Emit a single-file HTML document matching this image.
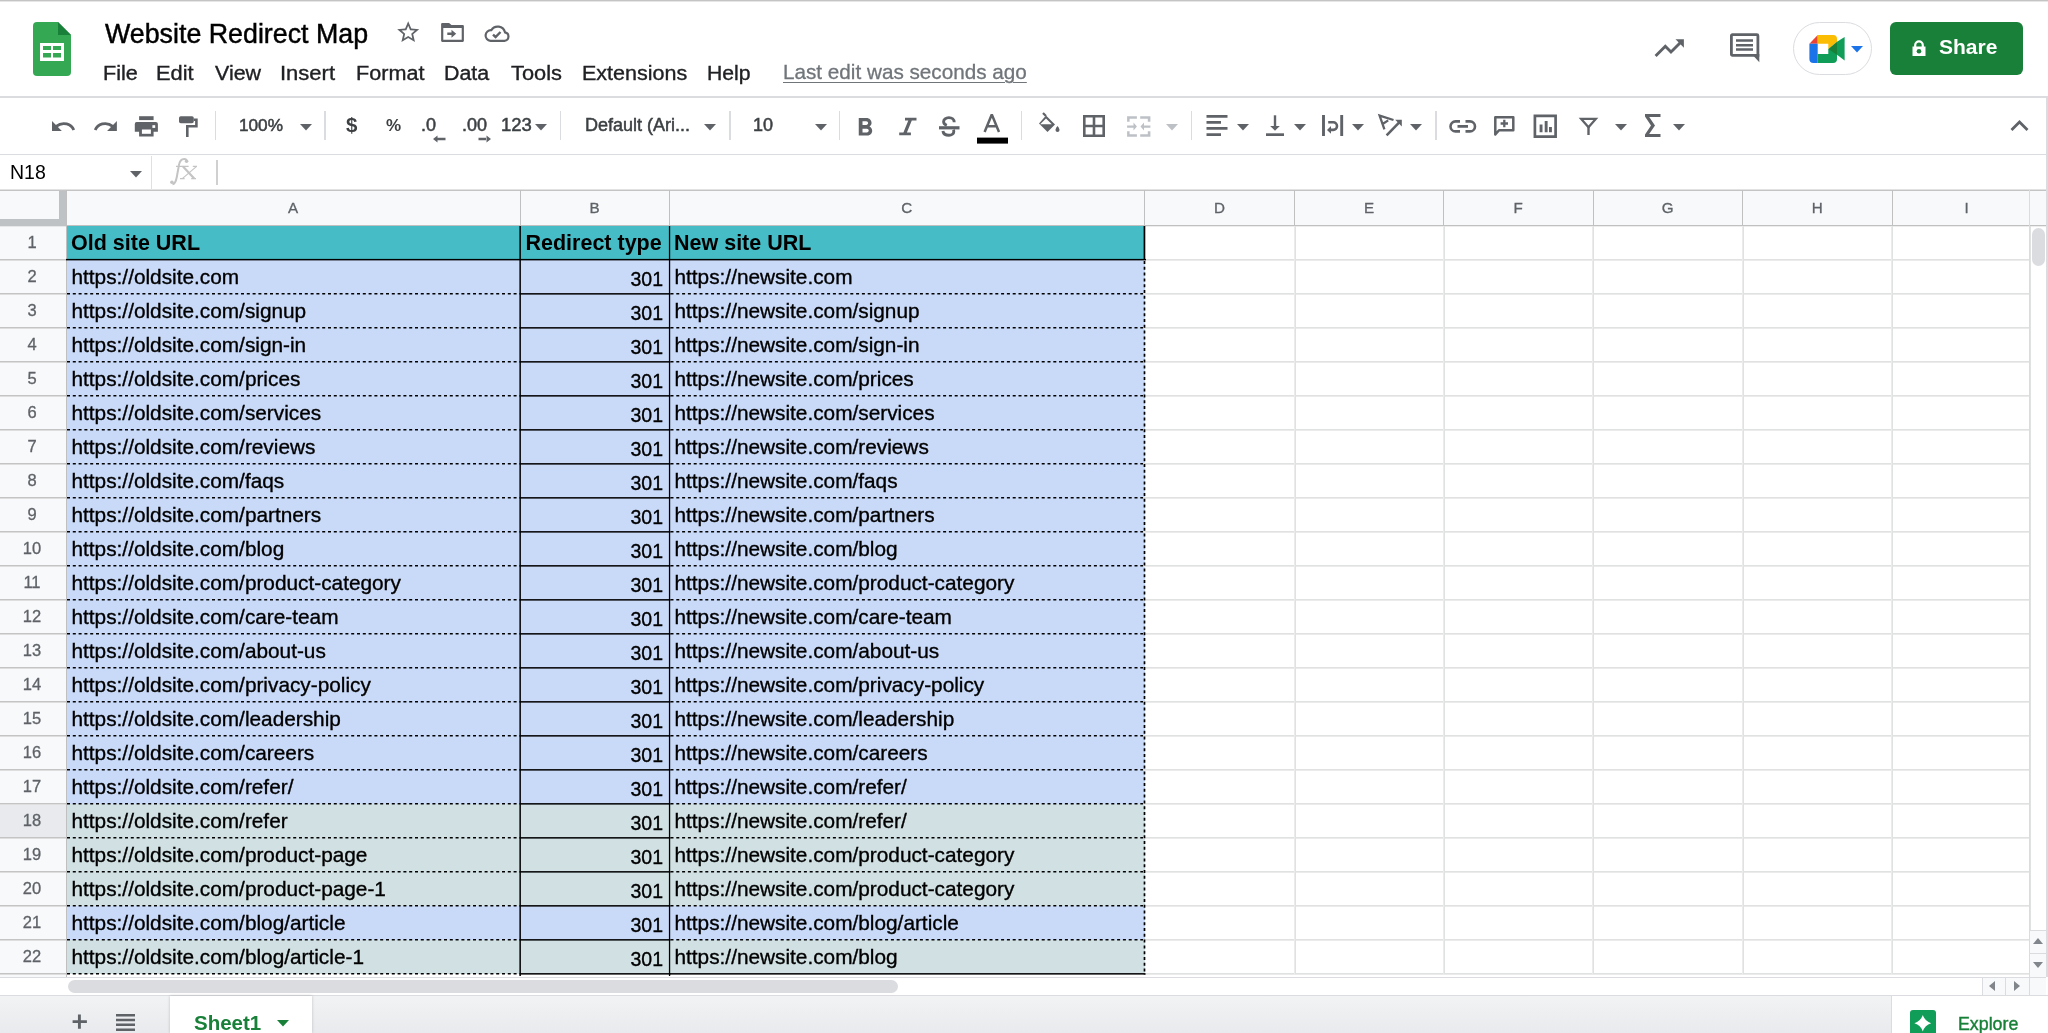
<!DOCTYPE html>
<html><head><meta charset="utf-8"><title>Website Redirect Map</title>
<style>
*{box-sizing:border-box;margin:0;padding:0}
html,body{width:2048px;height:1033px;overflow:hidden;background:#fff}
body{position:relative;font-family:"Liberation Sans",sans-serif;color:#202124;will-change:transform}
.md{-webkit-text-stroke:0.5px currentColor}
.ct{color:#000;-webkit-text-stroke:0.35px #000}
.a{position:absolute}
.t{position:absolute;white-space:nowrap;line-height:1}
svg{position:absolute;overflow:visible}
.ic{fill:#5f6368}
</style></head><body>

<div class="a" style="left:0;top:0;width:2048px;height:1px;background:#c4c4c4"></div><div class="a" style="left:0;top:1px;width:2048px;height:1px;background:#e6e6e6"></div>
<svg style="left:33px;top:22px" width="38" height="54" viewBox="0 0 38 54">
<path d="M4 0H25L38 13V50A4 4 0 0 1 34 54H4A4 4 0 0 1 0 50V4A4 4 0 0 1 4 0Z" fill="#34a853"/>
<path d="M25 0L38 13H25Z" fill="#188038"/>
<path d="M7 21H31V39H7Z" fill="#fff"/>
<path d="M10 24H18V28H10ZM20 24H28V28H20ZM10 31H18V35.5H10ZM20 31H28V35.5H20Z" fill="#34a853"/>
</svg>
<div class="t" style="left:105px;top:20.5px;font-size:26.8px;color:#000;-webkit-text-stroke:0.45px #000">Website Redirect Map</div>
<svg style="left:395.1px;top:19.2px" width="26.4" height="26.4" viewBox="0 0 24 24">
<path d="M22 9.24l-7.19-.62L12 2 9.19 8.63 2 9.24l5.46 4.73L5.82 21 12 17.27 18.18 21l-1.63-7.03L22 9.24zM12 15.4l-3.76 2.27 1-4.28-3.32-2.88 4.38-.38L12 6.1l1.71 4.04 4.38.38-3.32 2.88 1 4.28L12 15.4z" fill="#5f6368"/></svg>
<svg style="left:441px;top:23px" width="23" height="19" viewBox="0 0 23 19">
<path d="M1.2 17.8V1.2H8L10 3H21.8V17.8Z" fill="none" stroke="#5f6368" stroke-width="2.2" stroke-linejoin="round"/>
<path d="M1 1H8L10 3H22V5H1Z" fill="#5f6368"/>
<path d="M6.3 9.4H10.5V6.8L15.2 10.7L10.5 14.7V12H6.3Z" fill="#5f6368"/></svg>
<svg style="left:484px;top:24px" width="26" height="18" viewBox="0 0 26 18">
<path d="M6.5 16.8H20.5A4.3 4.3 0 0 0 21 8.3A7.5 7.5 0 0 0 7.3 6.2A5.3 5.3 0 0 0 6.5 16.8Z" fill="none" stroke="#5f6368" stroke-width="2.2"/>
<path d="M9 10.6L11.6 13L16.5 8" fill="none" stroke="#5f6368" stroke-width="2.4"/></svg>
<div class="t" style="left:102.6px;top:63px;font-size:20px;color:#202124;-webkit-text-stroke:0.35px #202124;transform:scaleX(1.08);transform-origin:0 0">File</div>
<div class="t" style="left:155.8px;top:63px;font-size:20px;color:#202124;-webkit-text-stroke:0.35px #202124;transform:scaleX(1.09);transform-origin:0 0">Edit</div>
<div class="t" style="left:214.9px;top:63px;font-size:20px;color:#202124;-webkit-text-stroke:0.35px #202124;transform:scaleX(1.07);transform-origin:0 0">View</div>
<div class="t" style="left:279.8px;top:63px;font-size:20px;color:#202124;-webkit-text-stroke:0.35px #202124;transform:scaleX(1.1);transform-origin:0 0">Insert</div>
<div class="t" style="left:355.8px;top:63px;font-size:20px;color:#202124;-webkit-text-stroke:0.35px #202124;transform:scaleX(1.08);transform-origin:0 0">Format</div>
<div class="t" style="left:443.9px;top:63px;font-size:20px;color:#202124;-webkit-text-stroke:0.35px #202124;transform:scaleX(1.07);transform-origin:0 0">Data</div>
<div class="t" style="left:511px;top:63px;font-size:20px;color:#202124;-webkit-text-stroke:0.35px #202124;transform:scaleX(1.09);transform-origin:0 0">Tools</div>
<div class="t" style="left:581.9px;top:63px;font-size:20px;color:#202124;-webkit-text-stroke:0.35px #202124;transform:scaleX(1.075);transform-origin:0 0">Extensions</div>
<div class="t" style="left:707px;top:63px;font-size:20px;color:#202124;-webkit-text-stroke:0.35px #202124;transform:scaleX(1.06);transform-origin:0 0">Help</div>
<div class="t" style="left:783px;top:62px;font-size:20.7px;color:#70757a;-webkit-text-stroke:0.3px #70757a;text-decoration:underline;text-decoration-thickness:1.4px;text-underline-offset:2.5px">Last edit was seconds ago</div>
<svg style="left:1654px;top:38px" width="32" height="20" viewBox="0 0 32 20">
<path d="M1.6 18L11.3 8.3L17 14L26.5 4.5" fill="none" stroke="#5f6368" stroke-width="2.9"/>
<path d="M21.5 1.3H29.9V9.7Z" fill="#5f6368"/></svg>
<svg style="left:1729px;top:33px" width="32" height="30" viewBox="0 0 32 30">
<path d="M3.4 1.7H27.9A1 1 0 0 1 28.9 2.7V22.3H3.4A1 1 0 0 1 2.4 21.3V2.7A1 1 0 0 1 3.4 1.7Z" fill="none" stroke="#5f6368" stroke-width="2.8"/>
<path d="M22.8 20.9H30.3V29.3Z" fill="#5f6368"/>
<path d="M7 6.3H24V8.8H7ZM7 11H24V13.6H7ZM7 15.2H24V17.7H7Z" fill="#5f6368"/></svg>
<div class="a" style="left:1793px;top:22px;width:79px;height:53px;border:1.5px solid #dadce0;border-radius:27px"></div>
<svg style="left:1800px;top:28px" width="70" height="42" viewBox="0 0 70 42">
<path d="M9.4 15.7L17.7 6.9V15.7Z" fill="#ea4335"/>
<path d="M17.7 6.9H33A4 4 0 0 1 37 10.9V13.8L28.3 20.9V15.7H17.7Z" fill="#fbbc04"/>
<path d="M9.4 15.7H17.7V35H13.4A4 4 0 0 1 9.4 31Z" fill="#1a73e8"/>
<path d="M17.7 26H28.3V20.9H37V31A4 4 0 0 1 33 35H17.7Z" fill="#0f9d58"/>
<path d="M28.3 20.9L37 13.8V26.8Z" fill="#188038"/>
<path d="M37 13.8L44.6 9V32.6L37 26.8Z" fill="#0f9d58"/>
</svg>
<svg style="left:1851px;top:46px" width="12" height="7" viewBox="0 0 12 7"><path d="M0 0H12L6 6.5Z" fill="#1a73e8"/></svg>
<div class="a" style="left:1890px;top:22px;width:133px;height:53px;background:#188038;border-radius:6px"></div>
<svg style="left:1911px;top:39px" width="16" height="18" viewBox="0 0 16 18">
<path d="M4.2 8V6.2A3.8 3.8 0 0 1 11.8 6.2V8" fill="none" stroke="#fff" stroke-width="2.2"/>
<path d="M1.5 7.5H14.5V17H1.5Z" fill="#fff"/><circle cx="8" cy="12.3" r="2.3" fill="#188038"/></svg>
<div class="t" style="left:1939px;top:36px;font-size:21px;color:#fff;font-weight:bold">Share</div>
<div class="a" style="left:0;top:96px;width:2048px;height:1.5px;background:#dadce0"></div>
<div class="a" style="left:2046px;top:97px;width:2px;height:880px;background:#dadce0"></div>
<div class="a" style="left:0;top:154px;width:2048px;height:1px;background:#dadce0"></div>
<svg style="left:51px;top:118px" width="26" height="14" viewBox="0 0 26 14">
<path d="M22.8 12C20.5 6.3 12 2.8 5.2 8.4" fill="none" stroke="#5f6368" stroke-width="2.8"/>
<path d="M1 2.9V13H10.8Z" fill="#5f6368"/></svg>
<svg style="left:92px;top:118px" width="26" height="14" viewBox="0 0 26 14">
<path d="M3.2 12C5.5 6.3 14 2.8 20.8 8.4" fill="none" stroke="#5f6368" stroke-width="2.8"/>
<path d="M24.9 2.9V13H15.1Z" fill="#5f6368"/></svg>
<svg style="left:134px;top:115px" width="25" height="23" viewBox="0 0 25 23">
<path d="M5.1 1.2H19.6V5.1H5.1Z" fill="#5f6368"/>
<path d="M3 7H21.9A2 2 0 0 1 23.9 9V16.8H19.6V21.5H5.1V16.8H0.8V9A2 2 0 0 1 3 7Z" fill="#5f6368"/>
<path d="M7.9 14.5H16.9V18.8H7.9Z" fill="#fff"/><rect x="18.4" y="10.2" width="2.8" height="2.7" fill="#fff"/></svg>
<svg style="left:179px;top:115px" width="20" height="23" viewBox="0 0 20 23">
<path d="M1.8 1.2H13A1.8 1.8 0 0 1 14.8 3V6.4A1.8 1.8 0 0 1 13 8.2H1.8A1.8 1.8 0 0 1 0 6.4V3A1.8 1.8 0 0 1 1.8 1.2Z" fill="#5f6368"/>
<path d="M14.8 4.7H17.4V11.3H8.3V21.9" fill="none" stroke="#5f6368" stroke-width="2.6"/></svg>
<div class="a" style="left:214.5px;top:111px;width:1.5px;height:29px;background:#dadce0"></div>
<div class="t md" style="left:239px;top:116.5px;font-size:17.2px;color:#3c4043">100%</div>
<svg style="left:300px;top:124px" width="12" height="7" viewBox="0 0 12 7"><path d="M0 0H12L6 6.5Z" fill="#5f6368"/></svg>
<div class="a" style="left:324px;top:111px;width:1.5px;height:29px;background:#dadce0"></div>
<div class="t" style="left:346px;top:114.5px;font-size:20.5px;color:#3c4043;font-weight:bold">$</div>
<div class="t" style="left:386px;top:116.5px;font-size:17px;color:#3c4043;font-weight:bold">%</div>
<div class="t md" style="left:421px;top:116px;font-size:18px;color:#3c4043">.0</div>
<svg style="left:433px;top:136px" width="13" height="6" viewBox="0 0 13 6"><path d="M4 1.8H12.5V4.2H4Z M0 3L4.5 -0.5V6.5Z" fill="#5f6368"/></svg>
<div class="t md" style="left:462px;top:116px;font-size:18px;color:#3c4043">.00</div>
<svg style="left:478px;top:136px" width="13" height="6" viewBox="0 0 13 6"><path d="M0.5 1.8H9V4.2H0.5Z M13 3L8.5 -0.5V6.5Z" fill="#5f6368"/></svg>
<div class="t md" style="left:501px;top:116px;font-size:18.5px;color:#3c4043">123</div>
<svg style="left:535px;top:124px" width="12" height="7" viewBox="0 0 12 7"><path d="M0 0H12L6 6.5Z" fill="#5f6368"/></svg>
<div class="a" style="left:559.5px;top:111px;width:1.5px;height:29px;background:#dadce0"></div>
<div class="t md" style="left:585px;top:116px;font-size:18px;color:#3c4043">Default (Ari...</div>
<svg style="left:704px;top:124px" width="12" height="7" viewBox="0 0 12 7"><path d="M0 0H12L6 6.5Z" fill="#5f6368"/></svg>
<div class="a" style="left:729px;top:111px;width:1.5px;height:29px;background:#dadce0"></div>
<div class="t md" style="left:753px;top:116px;font-size:18px;color:#3c4043">10</div>
<svg style="left:815px;top:124px" width="12" height="7" viewBox="0 0 12 7"><path d="M0 0H12L6 6.5Z" fill="#5f6368"/></svg>
<div class="a" style="left:838.5px;top:111px;width:1.5px;height:29px;background:#dadce0"></div>
<svg style="left:850.25px;top:112.5px" width="30" height="30" viewBox="0 0 24 24">
<path d="M15.6 10.79c.97-.67 1.65-1.77 1.65-2.79 0-2.26-1.75-4-4-4H7v14h7.04c2.09 0 3.71-1.7 3.71-3.79 0-1.52-.86-2.82-2.15-3.42zM10 6.5h3c.83 0 1.5.67 1.5 1.5s-.67 1.5-1.5 1.5h-3v-3zm3.5 9H10v-3h3.5c.83 0 1.5.67 1.5 1.5s-.67 1.5-1.5 1.5z" fill="#5f6368"/></svg>
<svg style="left:898px;top:116px" width="20" height="20" viewBox="0 0 20 20">
<path d="M7 1.7H18.5V4.6H7ZM1.2 16.4H12.9V19.2H1.2ZM10.3 4.6H13.8L8.9 16.4H5.4Z" fill="#5f6368"/></svg>
<svg style="left:938px;top:116px" width="23" height="21" viewBox="0 0 23 21">
<path d="M16.2 6.3C16.2 3.6 13.9 1.6 10.9 1.6C7.7 1.6 5.6 3.4 5.6 5.8C5.6 7.5 6.8 8.6 8.8 9.4" fill="none" stroke="#5f6368" stroke-width="2.9"/>
<rect x="1" y="10.2" width="20.5" height="3.2" fill="#5f6368"/>
<path d="M15.3 13.8C15.6 14.3 15.8 14.8 15.8 15.4C15.8 17.7 13.7 19.3 11 19.3C7.8 19.3 5.3 17.7 4.9 15" fill="none" stroke="#5f6368" stroke-width="2.9"/></svg>
<svg style="left:977px;top:112px" width="32" height="32" viewBox="0 0 32 32">
<path d="M7.6 20L14.8 2.5M14.8 2.5L22 20M10 14.3H19.6" fill="none" stroke="#5f6368" stroke-width="2.5"/>
<rect x="0" y="25.6" width="31" height="6" fill="#000"/></svg>
<div class="a" style="left:1020.5px;top:111px;width:1.5px;height:29px;background:#dadce0"></div>
<svg style="left:1037px;top:112px" width="24" height="21" viewBox="0 0 24 21">
<path d="M6 1L9 4" stroke="#5f6368" stroke-width="2.2"/>
<path d="M9 3.5L18 12.5L10.5 20L2 11.5Z" fill="#5f6368"/>
<path d="M9 6.5L14.8 12.3H3.2Z" fill="#fff"/>
<path d="M20.5 14C22 16 22.5 17 22.5 18A2 2 0 0 1 18.5 18C18.5 17 19 16 20.5 14Z" fill="#5f6368"/></svg>
<svg style="left:1083px;top:115px" width="22" height="22" viewBox="0 0 22 22">
<path d="M1.3 1.3H20.7V20.7H1.3ZM11 1.3V20.7M1.3 11H20.7" fill="none" stroke="#5f6368" stroke-width="2.6"/></svg>
<svg style="left:1115px;top:108px" width="40" height="37" viewBox="0 0 40 37">
<path d="M12.1 8.2H21.9V10.7H14.6V13.7H12.1ZM25.2 8.2H35.4V13.7H32.8V10.7H25.2ZM12.1 23.2H14.6V26.2H21.9V28.7H12.1ZM32.8 23.2H35.4V28.7H25.2V26.2H32.8Z" fill="#bdc1c6"/>
<path d="M12.1 17.4H18.5V14.5L21.9 18.5L18.5 22.5V19.7H12.1ZM35.4 17.4H29V14.5L25.5 18.5L29 22.5V19.7H35.4Z" fill="#bdc1c6"/></svg>
<svg style="left:1165.5px;top:124px" width="12" height="7" viewBox="0 0 12 7"><path d="M0 0H12L6 6.5Z" fill="#bdc1c6"/></svg>
<div class="a" style="left:1190.5px;top:111px;width:1.5px;height:29px;background:#dadce0"></div>
<svg style="left:1206px;top:115px" width="22" height="22" viewBox="0 0 22 22">
<path d="M0.5 0H21.5V2.8H0.5ZM0.5 6H15V8.8H0.5ZM0.5 12H21.5V14.8H0.5ZM0.5 18.2H15V21H0.5Z" fill="#5f6368"/></svg>
<svg style="left:1237px;top:124px" width="12" height="7" viewBox="0 0 12 7"><path d="M0 0H12L6 6.5Z" fill="#5f6368"/></svg>
<svg style="left:1266px;top:115px" width="18" height="22" viewBox="0 0 18 22">
<path d="M9 0.3V13" stroke="#5f6368" stroke-width="2.4"/><path d="M4.2 11H13.8L9 15.8Z" fill="#5f6368"/>
<path d="M0 18.3H18V21H0Z" fill="#5f6368"/></svg>
<svg style="left:1294px;top:124px" width="12" height="7" viewBox="0 0 12 7"><path d="M0 0H12L6 6.5Z" fill="#5f6368"/></svg>
<svg style="left:1322px;top:115px" width="22" height="22" viewBox="0 0 22 22">
<path d="M1.5 0V21M19.7 0V21" stroke="#5f6368" stroke-width="2.9"/>
<path d="M6.2 7.3H11.2A3.8 3.8 0 0 1 11.2 14.9H8.4" fill="none" stroke="#5f6368" stroke-width="2.6"/>
<path d="M5 14.9L9 11V18.8Z" fill="#5f6368"/></svg>
<svg style="left:1352px;top:124px" width="12" height="7" viewBox="0 0 12 7"><path d="M0 0H12L6 6.5Z" fill="#5f6368"/></svg>
<svg style="left:1378px;top:114px" width="25" height="23" viewBox="0 0 25 23">
<path d="M15.5 6L1.6 1.6L6.4 15.4M5 9.8L10.2 6.4" fill="none" stroke="#5f6368" stroke-width="2.3"/>
<path d="M8.6 21.3L21.5 8.2" stroke="#5f6368" stroke-width="2.6"/>
<path d="M17.2 5.8H23.8V12.4Z" fill="#5f6368"/></svg>
<svg style="left:1410px;top:124px" width="12" height="7" viewBox="0 0 12 7"><path d="M0 0H12L6 6.5Z" fill="#5f6368"/></svg>
<div class="a" style="left:1435px;top:111px;width:1.5px;height:29px;background:#dadce0"></div>
<svg style="left:1449px;top:120px" width="28" height="13" viewBox="0 0 28 13">
<path d="M11 1.4H6.5A5 5 0 0 0 6.5 11.4H11M16.5 1.4H21A5 5 0 0 1 21 11.4H16.5M8.5 6.4H19" fill="none" stroke="#5f6368" stroke-width="2.6"/></svg>
<svg style="left:1493px;top:115px" width="22" height="22" viewBox="0 0 22 22">
<path d="M2.3 19.5V2.3H20.3V15.2H6Z" fill="none" stroke="#5f6368" stroke-width="2.5" stroke-linejoin="round"/>
<path d="M11.3 4.8V12.2M7.6 8.5H15" stroke="#5f6368" stroke-width="2.3"/></svg>
<svg style="left:1533px;top:114px" width="25" height="25" viewBox="0 0 25 25">
<path d="M1.9 1.9H22.6V22.6H1.9Z" fill="none" stroke="#5f6368" stroke-width="2.7"/>
<path d="M6.6 10.5H9.5V18.2H6.6ZM11.7 7H14.6V18.2H11.7ZM16 13H18.9V18.2H16Z" fill="#5f6368"/></svg>
<svg style="left:1579px;top:117px" width="19" height="19" viewBox="0 0 19 19">
<path d="M2.2 1.9H16.8L9.5 10.2Z" fill="none" stroke="#5f6368" stroke-width="2.3" stroke-linejoin="miter"/>
<path d="M9.5 9.5V18" stroke="#5f6368" stroke-width="2.4"/></svg>
<svg style="left:1615px;top:124px" width="12" height="7" viewBox="0 0 12 7"><path d="M0 0H12L6 6.5Z" fill="#5f6368"/></svg>
<svg style="left:1645px;top:114px" width="17" height="23" viewBox="0 0 17 23">
<path d="M0 0H15.5V3H4.2L10 11.5L4.2 20H15.5V23H0V20.5L6 11.5L0 2.5Z" fill="#5f6368"/></svg>
<svg style="left:1673px;top:124px" width="12" height="7" viewBox="0 0 12 7"><path d="M0 0H12L6 6.5Z" fill="#5f6368"/></svg>
<svg style="left:2010px;top:119px" width="19" height="13" viewBox="0 0 19 13">
<path d="M1.5 11L9.5 3L17.5 11" fill="none" stroke="#5f6368" stroke-width="2.8"/></svg>
<div class="t" style="left:10px;top:162.5px;font-size:19.5px;color:#000">N18</div>
<svg style="left:130px;top:171px" width="12" height="7" viewBox="0 0 12 7"><path d="M0 0H12L6 6.5Z" fill="#5f6368"/></svg>
<div class="a" style="left:151px;top:156px;width:1px;height:33px;background:#e0e0e0"></div>
<svg style="left:168px;top:156px" width="32" height="32" viewBox="0 0 32 32">
<path d="M4.5 28.2C6.8 28 7.9 25.8 8.8 21L10.9 9.4C11.5 5.6 13 3 16.2 3C17.6 3 18.6 3.9 18.6 5.3" fill="none" stroke="#c4c4c4" stroke-width="2"/>
<circle cx="3.9" cy="26.3" r="1.8" fill="#c4c4c4"/><circle cx="18.6" cy="5.3" r="1.8" fill="#c4c4c4"/>
<path d="M8 10.4H20.6M12.8 10.4H17M24.8 10.4H29M12 22.6H16.6M23.2 22.6H28" stroke="#c4c4c4" stroke-width="1.3"/>
<path d="M15 10.4L26.2 22.6" stroke="#c4c4c4" stroke-width="2.2"/>
<path d="M28.6 10.4L14.3 22.6" stroke="#c4c4c4" stroke-width="1.2"/></svg>
<div class="a" style="left:216px;top:160px;width:1.5px;height:25px;background:#d0d0d0"></div>
<div class="a" style="left:0;top:189px;width:2046px;height:1px;background:#e2e2e2"></div><div class="a" style="left:0;top:190px;width:2046px;height:1px;background:#c4c4c4"></div>
<div class="a" style="left:0;top:191px;width:2046px;height:35px;background:#f8f9fa"></div>
<div class="a" style="left:0;top:226px;width:66px;height:751px;background:#f8f9fa"></div>
<div class="a" style="left:0;top:804px;width:66px;height:34px;background:#e8eaed"></div>
<div class="a" style="left:66px;top:226px;width:1963px;height:751px;background:#fff"></div>
<div class="t" style="left:66px;width:454px;text-align:center;top:199.8px;font-size:15.2px;color:#5f6368;-webkit-text-stroke:0.3px #5f6368">A</div>
<div class="a" style="left:519.5px;top:190px;width:1px;height:36px;background:#c0c0c0"></div>
<div class="t" style="left:520px;width:149px;text-align:center;top:199.8px;font-size:15.2px;color:#5f6368;-webkit-text-stroke:0.3px #5f6368">B</div>
<div class="a" style="left:668.5px;top:190px;width:1px;height:36px;background:#c0c0c0"></div>
<div class="t" style="left:669px;width:475.5px;text-align:center;top:199.8px;font-size:15.2px;color:#5f6368;-webkit-text-stroke:0.3px #5f6368">C</div>
<div class="a" style="left:1144.0px;top:190px;width:1px;height:36px;background:#c0c0c0"></div>
<div class="t" style="left:1144.5px;width:150.0px;text-align:center;top:199.8px;font-size:15.2px;color:#5f6368;-webkit-text-stroke:0.3px #5f6368">D</div>
<div class="a" style="left:1294.0px;top:190px;width:1px;height:36px;background:#c0c0c0"></div>
<div class="t" style="left:1294.5px;width:149.0px;text-align:center;top:199.8px;font-size:15.2px;color:#5f6368;-webkit-text-stroke:0.3px #5f6368">E</div>
<div class="a" style="left:1443.0px;top:190px;width:1px;height:36px;background:#c0c0c0"></div>
<div class="t" style="left:1443.5px;width:149.5px;text-align:center;top:199.8px;font-size:15.2px;color:#5f6368;-webkit-text-stroke:0.3px #5f6368">F</div>
<div class="a" style="left:1592.5px;top:190px;width:1px;height:36px;background:#c0c0c0"></div>
<div class="t" style="left:1593px;width:149.5px;text-align:center;top:199.8px;font-size:15.2px;color:#5f6368;-webkit-text-stroke:0.3px #5f6368">G</div>
<div class="a" style="left:1742.0px;top:190px;width:1px;height:36px;background:#c0c0c0"></div>
<div class="t" style="left:1742.5px;width:149.5px;text-align:center;top:199.8px;font-size:15.2px;color:#5f6368;-webkit-text-stroke:0.3px #5f6368">H</div>
<div class="a" style="left:1891.5px;top:190px;width:1px;height:36px;background:#c0c0c0"></div>
<div class="t" style="left:1892px;width:149px;text-align:center;top:199.8px;font-size:15.2px;color:#5f6368;-webkit-text-stroke:0.3px #5f6368">I</div>
<div class="a" style="left:2029.0px;top:190px;width:1px;height:36px;background:#c0c0c0"></div>
<div class="a" style="left:0;top:225px;width:2046px;height:1px;background:#c0c0c0"></div>
<div class="a" style="left:0;top:226px;width:2046px;height:1px;background:rgba(0,0,0,0.07)"></div>
<div class="a" style="left:59px;top:191px;width:7px;height:35px;background:#bec2c4"></div>
<div class="a" style="left:0;top:219px;width:66px;height:6.5px;background:#bec2c4"></div>
<div class="a" style="left:65.5px;top:190px;width:1px;height:787px;background:#c0c0c0"></div>
<div class="a" style="left:66.5px;top:226px;width:1078px;height:34px;background:#46bdc6"></div>
<div class="a" style="left:66.5px;top:260px;width:1078px;height:34px;background:#c9daf8"></div>
<div class="a" style="left:66.5px;top:294px;width:1078px;height:34px;background:#c9daf8"></div>
<div class="a" style="left:66.5px;top:328px;width:1078px;height:34px;background:#c9daf8"></div>
<div class="a" style="left:66.5px;top:362px;width:1078px;height:34px;background:#c9daf8"></div>
<div class="a" style="left:66.5px;top:396px;width:1078px;height:34px;background:#c9daf8"></div>
<div class="a" style="left:66.5px;top:430px;width:1078px;height:34px;background:#c9daf8"></div>
<div class="a" style="left:66.5px;top:464px;width:1078px;height:34px;background:#c9daf8"></div>
<div class="a" style="left:66.5px;top:498px;width:1078px;height:34px;background:#c9daf8"></div>
<div class="a" style="left:66.5px;top:532px;width:1078px;height:34px;background:#c9daf8"></div>
<div class="a" style="left:66.5px;top:566px;width:1078px;height:34px;background:#c9daf8"></div>
<div class="a" style="left:66.5px;top:600px;width:1078px;height:34px;background:#c9daf8"></div>
<div class="a" style="left:66.5px;top:634px;width:1078px;height:34px;background:#c9daf8"></div>
<div class="a" style="left:66.5px;top:668px;width:1078px;height:34px;background:#c9daf8"></div>
<div class="a" style="left:66.5px;top:702px;width:1078px;height:34px;background:#c9daf8"></div>
<div class="a" style="left:66.5px;top:736px;width:1078px;height:34px;background:#c9daf8"></div>
<div class="a" style="left:66.5px;top:770px;width:1078px;height:34px;background:#c9daf8"></div>
<div class="a" style="left:66.5px;top:804px;width:1078px;height:34px;background:#d0e0e3"></div>
<div class="a" style="left:66.5px;top:838px;width:1078px;height:34px;background:#d0e0e3"></div>
<div class="a" style="left:66.5px;top:872px;width:1078px;height:34px;background:#d0e0e3"></div>
<div class="a" style="left:66.5px;top:906px;width:1078px;height:34px;background:#c9daf8"></div>
<div class="a" style="left:66.5px;top:940px;width:1078px;height:34px;background:#d0e0e3"></div>
<div class="a" style="left:1144px;top:259px;width:885px;height:2px;background:linear-gradient(#e0e1e1 0 1px,#ebebeb 1px 2px)"></div>
<div class="a" style="left:0;top:259px;width:66px;height:2px;background:linear-gradient(#c4c4c4 0 1px,#dedede 1px 2px)"></div>
<div class="a" style="left:1144px;top:293px;width:885px;height:2px;background:linear-gradient(#e0e1e1 0 1px,#ebebeb 1px 2px)"></div>
<div class="a" style="left:0;top:293px;width:66px;height:2px;background:linear-gradient(#c4c4c4 0 1px,#dedede 1px 2px)"></div>
<div class="a" style="left:1144px;top:327px;width:885px;height:2px;background:linear-gradient(#e0e1e1 0 1px,#ebebeb 1px 2px)"></div>
<div class="a" style="left:0;top:327px;width:66px;height:2px;background:linear-gradient(#c4c4c4 0 1px,#dedede 1px 2px)"></div>
<div class="a" style="left:1144px;top:361px;width:885px;height:2px;background:linear-gradient(#e0e1e1 0 1px,#ebebeb 1px 2px)"></div>
<div class="a" style="left:0;top:361px;width:66px;height:2px;background:linear-gradient(#c4c4c4 0 1px,#dedede 1px 2px)"></div>
<div class="a" style="left:1144px;top:395px;width:885px;height:2px;background:linear-gradient(#e0e1e1 0 1px,#ebebeb 1px 2px)"></div>
<div class="a" style="left:0;top:395px;width:66px;height:2px;background:linear-gradient(#c4c4c4 0 1px,#dedede 1px 2px)"></div>
<div class="a" style="left:1144px;top:429px;width:885px;height:2px;background:linear-gradient(#e0e1e1 0 1px,#ebebeb 1px 2px)"></div>
<div class="a" style="left:0;top:429px;width:66px;height:2px;background:linear-gradient(#c4c4c4 0 1px,#dedede 1px 2px)"></div>
<div class="a" style="left:1144px;top:463px;width:885px;height:2px;background:linear-gradient(#e0e1e1 0 1px,#ebebeb 1px 2px)"></div>
<div class="a" style="left:0;top:463px;width:66px;height:2px;background:linear-gradient(#c4c4c4 0 1px,#dedede 1px 2px)"></div>
<div class="a" style="left:1144px;top:497px;width:885px;height:2px;background:linear-gradient(#e0e1e1 0 1px,#ebebeb 1px 2px)"></div>
<div class="a" style="left:0;top:497px;width:66px;height:2px;background:linear-gradient(#c4c4c4 0 1px,#dedede 1px 2px)"></div>
<div class="a" style="left:1144px;top:531px;width:885px;height:2px;background:linear-gradient(#e0e1e1 0 1px,#ebebeb 1px 2px)"></div>
<div class="a" style="left:0;top:531px;width:66px;height:2px;background:linear-gradient(#c4c4c4 0 1px,#dedede 1px 2px)"></div>
<div class="a" style="left:1144px;top:565px;width:885px;height:2px;background:linear-gradient(#e0e1e1 0 1px,#ebebeb 1px 2px)"></div>
<div class="a" style="left:0;top:565px;width:66px;height:2px;background:linear-gradient(#c4c4c4 0 1px,#dedede 1px 2px)"></div>
<div class="a" style="left:1144px;top:599px;width:885px;height:2px;background:linear-gradient(#e0e1e1 0 1px,#ebebeb 1px 2px)"></div>
<div class="a" style="left:0;top:599px;width:66px;height:2px;background:linear-gradient(#c4c4c4 0 1px,#dedede 1px 2px)"></div>
<div class="a" style="left:1144px;top:633px;width:885px;height:2px;background:linear-gradient(#e0e1e1 0 1px,#ebebeb 1px 2px)"></div>
<div class="a" style="left:0;top:633px;width:66px;height:2px;background:linear-gradient(#c4c4c4 0 1px,#dedede 1px 2px)"></div>
<div class="a" style="left:1144px;top:667px;width:885px;height:2px;background:linear-gradient(#e0e1e1 0 1px,#ebebeb 1px 2px)"></div>
<div class="a" style="left:0;top:667px;width:66px;height:2px;background:linear-gradient(#c4c4c4 0 1px,#dedede 1px 2px)"></div>
<div class="a" style="left:1144px;top:701px;width:885px;height:2px;background:linear-gradient(#e0e1e1 0 1px,#ebebeb 1px 2px)"></div>
<div class="a" style="left:0;top:701px;width:66px;height:2px;background:linear-gradient(#c4c4c4 0 1px,#dedede 1px 2px)"></div>
<div class="a" style="left:1144px;top:735px;width:885px;height:2px;background:linear-gradient(#e0e1e1 0 1px,#ebebeb 1px 2px)"></div>
<div class="a" style="left:0;top:735px;width:66px;height:2px;background:linear-gradient(#c4c4c4 0 1px,#dedede 1px 2px)"></div>
<div class="a" style="left:1144px;top:769px;width:885px;height:2px;background:linear-gradient(#e0e1e1 0 1px,#ebebeb 1px 2px)"></div>
<div class="a" style="left:0;top:769px;width:66px;height:2px;background:linear-gradient(#c4c4c4 0 1px,#dedede 1px 2px)"></div>
<div class="a" style="left:1144px;top:803px;width:885px;height:2px;background:linear-gradient(#e0e1e1 0 1px,#ebebeb 1px 2px)"></div>
<div class="a" style="left:0;top:803px;width:66px;height:2px;background:linear-gradient(#c4c4c4 0 1px,#dedede 1px 2px)"></div>
<div class="a" style="left:1144px;top:837px;width:885px;height:2px;background:linear-gradient(#e0e1e1 0 1px,#ebebeb 1px 2px)"></div>
<div class="a" style="left:0;top:837px;width:66px;height:2px;background:linear-gradient(#c4c4c4 0 1px,#dedede 1px 2px)"></div>
<div class="a" style="left:1144px;top:871px;width:885px;height:2px;background:linear-gradient(#e0e1e1 0 1px,#ebebeb 1px 2px)"></div>
<div class="a" style="left:0;top:871px;width:66px;height:2px;background:linear-gradient(#c4c4c4 0 1px,#dedede 1px 2px)"></div>
<div class="a" style="left:1144px;top:905px;width:885px;height:2px;background:linear-gradient(#e0e1e1 0 1px,#ebebeb 1px 2px)"></div>
<div class="a" style="left:0;top:905px;width:66px;height:2px;background:linear-gradient(#c4c4c4 0 1px,#dedede 1px 2px)"></div>
<div class="a" style="left:1144px;top:939px;width:885px;height:2px;background:linear-gradient(#e0e1e1 0 1px,#ebebeb 1px 2px)"></div>
<div class="a" style="left:0;top:939px;width:66px;height:2px;background:linear-gradient(#c4c4c4 0 1px,#dedede 1px 2px)"></div>
<div class="a" style="left:1144px;top:973px;width:885px;height:2px;background:linear-gradient(#e0e1e1 0 1px,#ebebeb 1px 2px)"></div>
<div class="a" style="left:0;top:973px;width:66px;height:2px;background:linear-gradient(#c4c4c4 0 1px,#dedede 1px 2px)"></div>
<div class="a" style="left:1293.5px;top:226px;width:2px;height:748px;background:linear-gradient(to right,#ebebeb 0 1px,#e0e1e1 1px 2px)"></div>
<div class="a" style="left:1442.5px;top:226px;width:2px;height:748px;background:linear-gradient(to right,#ebebeb 0 1px,#e0e1e1 1px 2px)"></div>
<div class="a" style="left:1592.0px;top:226px;width:2px;height:748px;background:linear-gradient(to right,#ebebeb 0 1px,#e0e1e1 1px 2px)"></div>
<div class="a" style="left:1741.5px;top:226px;width:2px;height:748px;background:linear-gradient(to right,#ebebeb 0 1px,#e0e1e1 1px 2px)"></div>
<div class="a" style="left:1891.0px;top:226px;width:2px;height:748px;background:linear-gradient(to right,#ebebeb 0 1px,#e0e1e1 1px 2px)"></div>
<div class="a" style="left:2028.5px;top:226px;width:2px;height:748px;background:linear-gradient(to right,#ebebeb 0 1px,#e0e1e1 1px 2px)"></div>
<div class="a" style="left:0;top:977px;width:2046px;height:1px;background:#dadce0"></div>
<div class="a" style="left:2029px;top:190px;width:1px;height:805px;background:#dadce0"></div>
<svg style="left:0;top:0" width="2048" height="1033" viewBox="0 0 2048 1033"><rect x="66" y="258.9" width="1080" height="1.5" fill="#000"/><line x1="67" y1="293.8" x2="519" y2="293.8" stroke="#000" stroke-width="1.4" stroke-dasharray="3 2.8"/><line x1="670.5" y1="293.8" x2="1143" y2="293.8" stroke="#000" stroke-width="1.4" stroke-dasharray="3 2.8"/><rect x="519.4" y="293.1" width="151" height="1.5" fill="#000"/><line x1="67" y1="327.8" x2="519" y2="327.8" stroke="#000" stroke-width="1.4" stroke-dasharray="3 2.8"/><line x1="670.5" y1="327.8" x2="1143" y2="327.8" stroke="#000" stroke-width="1.4" stroke-dasharray="3 2.8"/><rect x="519.4" y="327.1" width="151" height="1.5" fill="#000"/><line x1="67" y1="361.8" x2="519" y2="361.8" stroke="#000" stroke-width="1.4" stroke-dasharray="3 2.8"/><line x1="670.5" y1="361.8" x2="1143" y2="361.8" stroke="#000" stroke-width="1.4" stroke-dasharray="3 2.8"/><rect x="519.4" y="361.1" width="151" height="1.5" fill="#000"/><line x1="67" y1="395.8" x2="519" y2="395.8" stroke="#000" stroke-width="1.4" stroke-dasharray="3 2.8"/><line x1="670.5" y1="395.8" x2="1143" y2="395.8" stroke="#000" stroke-width="1.4" stroke-dasharray="3 2.8"/><rect x="519.4" y="395.1" width="151" height="1.5" fill="#000"/><line x1="67" y1="429.8" x2="519" y2="429.8" stroke="#000" stroke-width="1.4" stroke-dasharray="3 2.8"/><line x1="670.5" y1="429.8" x2="1143" y2="429.8" stroke="#000" stroke-width="1.4" stroke-dasharray="3 2.8"/><rect x="519.4" y="429.1" width="151" height="1.5" fill="#000"/><line x1="67" y1="463.8" x2="519" y2="463.8" stroke="#000" stroke-width="1.4" stroke-dasharray="3 2.8"/><line x1="670.5" y1="463.8" x2="1143" y2="463.8" stroke="#000" stroke-width="1.4" stroke-dasharray="3 2.8"/><rect x="519.4" y="463.1" width="151" height="1.5" fill="#000"/><line x1="67" y1="497.8" x2="519" y2="497.8" stroke="#000" stroke-width="1.4" stroke-dasharray="3 2.8"/><line x1="670.5" y1="497.8" x2="1143" y2="497.8" stroke="#000" stroke-width="1.4" stroke-dasharray="3 2.8"/><rect x="519.4" y="497.1" width="151" height="1.5" fill="#000"/><line x1="67" y1="531.8000000000001" x2="519" y2="531.8000000000001" stroke="#000" stroke-width="1.4" stroke-dasharray="3 2.8"/><line x1="670.5" y1="531.8000000000001" x2="1143" y2="531.8000000000001" stroke="#000" stroke-width="1.4" stroke-dasharray="3 2.8"/><rect x="519.4" y="531.1" width="151" height="1.5" fill="#000"/><line x1="67" y1="565.8000000000001" x2="519" y2="565.8000000000001" stroke="#000" stroke-width="1.4" stroke-dasharray="3 2.8"/><line x1="670.5" y1="565.8000000000001" x2="1143" y2="565.8000000000001" stroke="#000" stroke-width="1.4" stroke-dasharray="3 2.8"/><rect x="519.4" y="565.1" width="151" height="1.5" fill="#000"/><line x1="67" y1="599.8000000000001" x2="519" y2="599.8000000000001" stroke="#000" stroke-width="1.4" stroke-dasharray="3 2.8"/><line x1="670.5" y1="599.8000000000001" x2="1143" y2="599.8000000000001" stroke="#000" stroke-width="1.4" stroke-dasharray="3 2.8"/><rect x="519.4" y="599.1" width="151" height="1.5" fill="#000"/><line x1="67" y1="633.8000000000001" x2="519" y2="633.8000000000001" stroke="#000" stroke-width="1.4" stroke-dasharray="3 2.8"/><line x1="670.5" y1="633.8000000000001" x2="1143" y2="633.8000000000001" stroke="#000" stroke-width="1.4" stroke-dasharray="3 2.8"/><rect x="519.4" y="633.1" width="151" height="1.5" fill="#000"/><line x1="67" y1="667.8000000000001" x2="519" y2="667.8000000000001" stroke="#000" stroke-width="1.4" stroke-dasharray="3 2.8"/><line x1="670.5" y1="667.8000000000001" x2="1143" y2="667.8000000000001" stroke="#000" stroke-width="1.4" stroke-dasharray="3 2.8"/><rect x="519.4" y="667.1" width="151" height="1.5" fill="#000"/><line x1="67" y1="701.8000000000001" x2="519" y2="701.8000000000001" stroke="#000" stroke-width="1.4" stroke-dasharray="3 2.8"/><line x1="670.5" y1="701.8000000000001" x2="1143" y2="701.8000000000001" stroke="#000" stroke-width="1.4" stroke-dasharray="3 2.8"/><rect x="519.4" y="701.1" width="151" height="1.5" fill="#000"/><line x1="67" y1="735.8000000000001" x2="519" y2="735.8000000000001" stroke="#000" stroke-width="1.4" stroke-dasharray="3 2.8"/><line x1="670.5" y1="735.8000000000001" x2="1143" y2="735.8000000000001" stroke="#000" stroke-width="1.4" stroke-dasharray="3 2.8"/><rect x="519.4" y="735.1" width="151" height="1.5" fill="#000"/><line x1="67" y1="769.8000000000001" x2="519" y2="769.8000000000001" stroke="#000" stroke-width="1.4" stroke-dasharray="3 2.8"/><line x1="670.5" y1="769.8000000000001" x2="1143" y2="769.8000000000001" stroke="#000" stroke-width="1.4" stroke-dasharray="3 2.8"/><rect x="519.4" y="769.1" width="151" height="1.5" fill="#000"/><line x1="67" y1="803.8000000000001" x2="519" y2="803.8000000000001" stroke="#000" stroke-width="1.4" stroke-dasharray="3 2.8"/><line x1="670.5" y1="803.8000000000001" x2="1143" y2="803.8000000000001" stroke="#000" stroke-width="1.4" stroke-dasharray="3 2.8"/><rect x="519.4" y="803.1" width="151" height="1.5" fill="#000"/><line x1="67" y1="837.8000000000001" x2="519" y2="837.8000000000001" stroke="#000" stroke-width="1.4" stroke-dasharray="3 2.8"/><line x1="670.5" y1="837.8000000000001" x2="1143" y2="837.8000000000001" stroke="#000" stroke-width="1.4" stroke-dasharray="3 2.8"/><rect x="519.4" y="837.1" width="151" height="1.5" fill="#000"/><line x1="67" y1="871.8000000000001" x2="519" y2="871.8000000000001" stroke="#000" stroke-width="1.4" stroke-dasharray="3 2.8"/><line x1="670.5" y1="871.8000000000001" x2="1143" y2="871.8000000000001" stroke="#000" stroke-width="1.4" stroke-dasharray="3 2.8"/><rect x="519.4" y="871.1" width="151" height="1.5" fill="#000"/><line x1="67" y1="905.8000000000001" x2="519" y2="905.8000000000001" stroke="#000" stroke-width="1.4" stroke-dasharray="3 2.8"/><line x1="670.5" y1="905.8000000000001" x2="1143" y2="905.8000000000001" stroke="#000" stroke-width="1.4" stroke-dasharray="3 2.8"/><rect x="519.4" y="905.1" width="151" height="1.5" fill="#000"/><line x1="67" y1="939.8000000000001" x2="519" y2="939.8000000000001" stroke="#000" stroke-width="1.4" stroke-dasharray="3 2.8"/><line x1="670.5" y1="939.8000000000001" x2="1143" y2="939.8000000000001" stroke="#000" stroke-width="1.4" stroke-dasharray="3 2.8"/><rect x="519.4" y="939.1" width="151" height="1.5" fill="#000"/><line x1="67" y1="973.8000000000001" x2="519" y2="973.8000000000001" stroke="#000" stroke-width="1.4" stroke-dasharray="3 2.8"/><rect x="669" y="973.1" width="476.5" height="1.5" fill="#000"/><rect x="519.4" y="973.1" width="151" height="1.5" fill="#000"/><rect x="519.4" y="226" width="1.5" height="750" fill="#000"/><rect x="668.9" y="226" width="1.3" height="750" fill="#000"/><rect x="1143.6" y="226" width="1.7" height="34" fill="#000"/><line x1="1144.5" y1="261" x2="1144.5" y2="975" stroke="#000" stroke-width="1.7" stroke-dasharray="3 2.8"/></svg>
<div class="t" style="left:71px;top:232.5px;font-size:21.5px;font-weight:bold;color:#000">Old site URL</div>
<div class="t" style="left:525.5px;top:232.5px;font-size:21.5px;font-weight:bold;color:#000">Redirect type</div>
<div class="t" style="left:674px;top:232.5px;font-size:21.5px;font-weight:bold;color:#000">New site URL</div>
<div class="t ct" style="left:71.5px;top:267px;font-size:20.8px">https://oldsite.com</div>
<div class="t ct" style="left:520px;width:143px;text-align:right;top:269.6px;font-size:19.5px">301</div>
<div class="t ct" style="left:674.5px;top:267px;font-size:20.8px">https://newsite.com</div>
<div class="t ct" style="left:71.5px;top:301px;font-size:20.8px">https://oldsite.com/signup</div>
<div class="t ct" style="left:520px;width:143px;text-align:right;top:303.6px;font-size:19.5px">301</div>
<div class="t ct" style="left:674.5px;top:301px;font-size:20.8px">https://newsite.com/signup</div>
<div class="t ct" style="left:71.5px;top:335px;font-size:20.8px">https://oldsite.com/sign-in</div>
<div class="t ct" style="left:520px;width:143px;text-align:right;top:337.6px;font-size:19.5px">301</div>
<div class="t ct" style="left:674.5px;top:335px;font-size:20.8px">https://newsite.com/sign-in</div>
<div class="t ct" style="left:71.5px;top:369px;font-size:20.8px">https://oldsite.com/prices</div>
<div class="t ct" style="left:520px;width:143px;text-align:right;top:371.6px;font-size:19.5px">301</div>
<div class="t ct" style="left:674.5px;top:369px;font-size:20.8px">https://newsite.com/prices</div>
<div class="t ct" style="left:71.5px;top:403px;font-size:20.8px">https://oldsite.com/services</div>
<div class="t ct" style="left:520px;width:143px;text-align:right;top:405.6px;font-size:19.5px">301</div>
<div class="t ct" style="left:674.5px;top:403px;font-size:20.8px">https://newsite.com/services</div>
<div class="t ct" style="left:71.5px;top:437px;font-size:20.8px">https://oldsite.com/reviews</div>
<div class="t ct" style="left:520px;width:143px;text-align:right;top:439.6px;font-size:19.5px">301</div>
<div class="t ct" style="left:674.5px;top:437px;font-size:20.8px">https://newsite.com/reviews</div>
<div class="t ct" style="left:71.5px;top:471px;font-size:20.8px">https://oldsite.com/faqs</div>
<div class="t ct" style="left:520px;width:143px;text-align:right;top:473.6px;font-size:19.5px">301</div>
<div class="t ct" style="left:674.5px;top:471px;font-size:20.8px">https://newsite.com/faqs</div>
<div class="t ct" style="left:71.5px;top:505px;font-size:20.8px">https://oldsite.com/partners</div>
<div class="t ct" style="left:520px;width:143px;text-align:right;top:507.6px;font-size:19.5px">301</div>
<div class="t ct" style="left:674.5px;top:505px;font-size:20.8px">https://newsite.com/partners</div>
<div class="t ct" style="left:71.5px;top:539px;font-size:20.8px">https://oldsite.com/blog</div>
<div class="t ct" style="left:520px;width:143px;text-align:right;top:541.6px;font-size:19.5px">301</div>
<div class="t ct" style="left:674.5px;top:539px;font-size:20.8px">https://newsite.com/blog</div>
<div class="t ct" style="left:71.5px;top:573px;font-size:20.8px">https://oldsite.com/product-category</div>
<div class="t ct" style="left:520px;width:143px;text-align:right;top:575.6px;font-size:19.5px">301</div>
<div class="t ct" style="left:674.5px;top:573px;font-size:20.8px">https://newsite.com/product-category</div>
<div class="t ct" style="left:71.5px;top:607px;font-size:20.8px">https://oldsite.com/care-team</div>
<div class="t ct" style="left:520px;width:143px;text-align:right;top:609.6px;font-size:19.5px">301</div>
<div class="t ct" style="left:674.5px;top:607px;font-size:20.8px">https://newsite.com/care-team</div>
<div class="t ct" style="left:71.5px;top:641px;font-size:20.8px">https://oldsite.com/about-us</div>
<div class="t ct" style="left:520px;width:143px;text-align:right;top:643.6px;font-size:19.5px">301</div>
<div class="t ct" style="left:674.5px;top:641px;font-size:20.8px">https://newsite.com/about-us</div>
<div class="t ct" style="left:71.5px;top:675px;font-size:20.8px">https://oldsite.com/privacy-policy</div>
<div class="t ct" style="left:520px;width:143px;text-align:right;top:677.6px;font-size:19.5px">301</div>
<div class="t ct" style="left:674.5px;top:675px;font-size:20.8px">https://newsite.com/privacy-policy</div>
<div class="t ct" style="left:71.5px;top:709px;font-size:20.8px">https://oldsite.com/leadership</div>
<div class="t ct" style="left:520px;width:143px;text-align:right;top:711.6px;font-size:19.5px">301</div>
<div class="t ct" style="left:674.5px;top:709px;font-size:20.8px">https://newsite.com/leadership</div>
<div class="t ct" style="left:71.5px;top:743px;font-size:20.8px">https://oldsite.com/careers</div>
<div class="t ct" style="left:520px;width:143px;text-align:right;top:745.6px;font-size:19.5px">301</div>
<div class="t ct" style="left:674.5px;top:743px;font-size:20.8px">https://newsite.com/careers</div>
<div class="t ct" style="left:71.5px;top:777px;font-size:20.8px">https://oldsite.com/refer/</div>
<div class="t ct" style="left:520px;width:143px;text-align:right;top:779.6px;font-size:19.5px">301</div>
<div class="t ct" style="left:674.5px;top:777px;font-size:20.8px">https://newsite.com/refer/</div>
<div class="t ct" style="left:71.5px;top:811px;font-size:20.8px">https://oldsite.com/refer</div>
<div class="t ct" style="left:520px;width:143px;text-align:right;top:813.6px;font-size:19.5px">301</div>
<div class="t ct" style="left:674.5px;top:811px;font-size:20.8px">https://newsite.com/refer/</div>
<div class="t ct" style="left:71.5px;top:845px;font-size:20.8px">https://oldsite.com/product-page</div>
<div class="t ct" style="left:520px;width:143px;text-align:right;top:847.6px;font-size:19.5px">301</div>
<div class="t ct" style="left:674.5px;top:845px;font-size:20.8px">https://newsite.com/product-category</div>
<div class="t ct" style="left:71.5px;top:879px;font-size:20.8px">https://oldsite.com/product-page-1</div>
<div class="t ct" style="left:520px;width:143px;text-align:right;top:881.6px;font-size:19.5px">301</div>
<div class="t ct" style="left:674.5px;top:879px;font-size:20.8px">https://newsite.com/product-category</div>
<div class="t ct" style="left:71.5px;top:913px;font-size:20.8px">https://oldsite.com/blog/article</div>
<div class="t ct" style="left:520px;width:143px;text-align:right;top:915.6px;font-size:19.5px">301</div>
<div class="t ct" style="left:674.5px;top:913px;font-size:20.8px">https://newsite.com/blog/article</div>
<div class="t ct" style="left:71.5px;top:947px;font-size:20.8px">https://oldsite.com/blog/article-1</div>
<div class="t ct" style="left:520px;width:143px;text-align:right;top:949.6px;font-size:19.5px">301</div>
<div class="t ct" style="left:674.5px;top:947px;font-size:20.8px">https://newsite.com/blog</div>
<div class="t" style="left:0;width:64px;text-align:center;top:233.5px;font-size:16.5px;color:#5f6368;-webkit-text-stroke:0.3px #5f6368">1</div>
<div class="t" style="left:0;width:64px;text-align:center;top:267.5px;font-size:16.5px;color:#5f6368;-webkit-text-stroke:0.3px #5f6368">2</div>
<div class="t" style="left:0;width:64px;text-align:center;top:301.5px;font-size:16.5px;color:#5f6368;-webkit-text-stroke:0.3px #5f6368">3</div>
<div class="t" style="left:0;width:64px;text-align:center;top:335.5px;font-size:16.5px;color:#5f6368;-webkit-text-stroke:0.3px #5f6368">4</div>
<div class="t" style="left:0;width:64px;text-align:center;top:369.5px;font-size:16.5px;color:#5f6368;-webkit-text-stroke:0.3px #5f6368">5</div>
<div class="t" style="left:0;width:64px;text-align:center;top:403.5px;font-size:16.5px;color:#5f6368;-webkit-text-stroke:0.3px #5f6368">6</div>
<div class="t" style="left:0;width:64px;text-align:center;top:437.5px;font-size:16.5px;color:#5f6368;-webkit-text-stroke:0.3px #5f6368">7</div>
<div class="t" style="left:0;width:64px;text-align:center;top:471.5px;font-size:16.5px;color:#5f6368;-webkit-text-stroke:0.3px #5f6368">8</div>
<div class="t" style="left:0;width:64px;text-align:center;top:505.5px;font-size:16.5px;color:#5f6368;-webkit-text-stroke:0.3px #5f6368">9</div>
<div class="t" style="left:0;width:64px;text-align:center;top:539.5px;font-size:16.5px;color:#5f6368;-webkit-text-stroke:0.3px #5f6368">10</div>
<div class="t" style="left:0;width:64px;text-align:center;top:573.5px;font-size:16.5px;color:#5f6368;-webkit-text-stroke:0.3px #5f6368">11</div>
<div class="t" style="left:0;width:64px;text-align:center;top:607.5px;font-size:16.5px;color:#5f6368;-webkit-text-stroke:0.3px #5f6368">12</div>
<div class="t" style="left:0;width:64px;text-align:center;top:641.5px;font-size:16.5px;color:#5f6368;-webkit-text-stroke:0.3px #5f6368">13</div>
<div class="t" style="left:0;width:64px;text-align:center;top:675.5px;font-size:16.5px;color:#5f6368;-webkit-text-stroke:0.3px #5f6368">14</div>
<div class="t" style="left:0;width:64px;text-align:center;top:709.5px;font-size:16.5px;color:#5f6368;-webkit-text-stroke:0.3px #5f6368">15</div>
<div class="t" style="left:0;width:64px;text-align:center;top:743.5px;font-size:16.5px;color:#5f6368;-webkit-text-stroke:0.3px #5f6368">16</div>
<div class="t" style="left:0;width:64px;text-align:center;top:777.5px;font-size:16.5px;color:#5f6368;-webkit-text-stroke:0.3px #5f6368">17</div>
<div class="t" style="left:0;width:64px;text-align:center;top:811.5px;font-size:16.5px;color:#5f6368;-webkit-text-stroke:0.3px #5f6368">18</div>
<div class="t" style="left:0;width:64px;text-align:center;top:845.5px;font-size:16.5px;color:#5f6368;-webkit-text-stroke:0.3px #5f6368">19</div>
<div class="t" style="left:0;width:64px;text-align:center;top:879.5px;font-size:16.5px;color:#5f6368;-webkit-text-stroke:0.3px #5f6368">20</div>
<div class="t" style="left:0;width:64px;text-align:center;top:913.5px;font-size:16.5px;color:#5f6368;-webkit-text-stroke:0.3px #5f6368">21</div>
<div class="t" style="left:0;width:64px;text-align:center;top:947.5px;font-size:16.5px;color:#5f6368;-webkit-text-stroke:0.3px #5f6368">22</div>
<div class="a" style="left:2032px;top:228px;width:13px;height:38px;background:#dadce0;border-radius:7px"></div>
<div class="a" style="left:2030px;top:930px;width:16px;height:47px;background:#f8f9fa"></div>
<div class="a" style="left:2030px;top:953px;width:16px;height:1px;background:#dadce0"></div>
<div class="a" style="left:2030px;top:930px;width:16px;height:1px;background:#dadce0"></div>
<svg style="left:2033px;top:938px" width="10" height="6" viewBox="0 0 10 6"><path d="M0 6H10L5 0Z" fill="#80868b"/></svg>
<svg style="left:2033px;top:962px" width="10" height="6" viewBox="0 0 10 6"><path d="M0 0H10L5 6Z" fill="#80868b"/></svg>
<div class="a" style="left:68px;top:980px;width:830px;height:13px;background:#dadce0;border-radius:7px"></div>
<div class="a" style="left:1982px;top:978px;width:64px;height:17px;background:#f8f9fa"></div>
<div class="a" style="left:1982px;top:978px;width:1px;height:17px;background:#dadce0"></div>
<div class="a" style="left:2005px;top:978px;width:1px;height:17px;background:#dadce0"></div>
<div class="a" style="left:2029px;top:978px;width:1px;height:17px;background:#dadce0"></div>
<svg style="left:1989px;top:981px" width="6" height="10" viewBox="0 0 6 10"><path d="M6 0V10L0 5Z" fill="#80868b"/></svg>
<svg style="left:2014px;top:981px" width="6" height="10" viewBox="0 0 6 10"><path d="M0 0V10L6 5Z" fill="#80868b"/></svg>
<div class="a" style="left:0;top:995px;width:2048px;height:38px;background:linear-gradient(#f1f3f4,#e8eaed)"></div>
<div class="a" style="left:0;top:994.5px;width:2048px;height:1px;background:#dadce0"></div>
<svg style="left:72px;top:1013.5px" width="16" height="16" viewBox="0 0 16 16"><path d="M7.4 0.5V14.8M0.6 7.6H14.9" stroke="#5f6368" stroke-width="2.9"/></svg>
<svg style="left:116px;top:1014px" width="19" height="17" viewBox="0 0 19 17"><path d="M0 0H19V2.5H0ZM0 4.8H19V7.3H0ZM0 9.6H19V12.1H0ZM0 14.4H19V17H0Z" fill="#5f6368"/></svg>
<div class="a" style="left:170px;top:996px;width:142px;height:37px;background:#fff;box-shadow:0 0 3px rgba(0,0,0,0.2)"></div>
<div class="t" style="left:194px;top:1013px;font-size:20.5px;color:#188038;font-weight:bold">Sheet1</div>
<svg style="left:277px;top:1020px" width="12" height="7" viewBox="0 0 12 7"><path d="M0 0H12L6 6.5Z" fill="#188038"/></svg>
<div class="a" style="left:1891px;top:996px;width:157px;height:37px;background:#fff;border-left:1.5px solid #dadce0"></div>
<svg style="left:1910px;top:1010px" width="26" height="23" viewBox="0 0 26 23">
<path d="M3 0H23A3 3 0 0 1 26 3V23H0V3A3 3 0 0 1 3 0Z" fill="#0f9d58"/>
<path d="M12.8 5Q14.8 11.2 21.2 13.2Q14.8 15.2 12.8 21.4Q10.8 15.2 4.4 13.2Q10.8 11.2 12.8 5Z" fill="#fff"/></svg>
<div class="t" style="left:1958px;top:1015.5px;font-size:17.8px;color:#188038;-webkit-text-stroke:0.4px #188038">Explore</div>
</body></html>
